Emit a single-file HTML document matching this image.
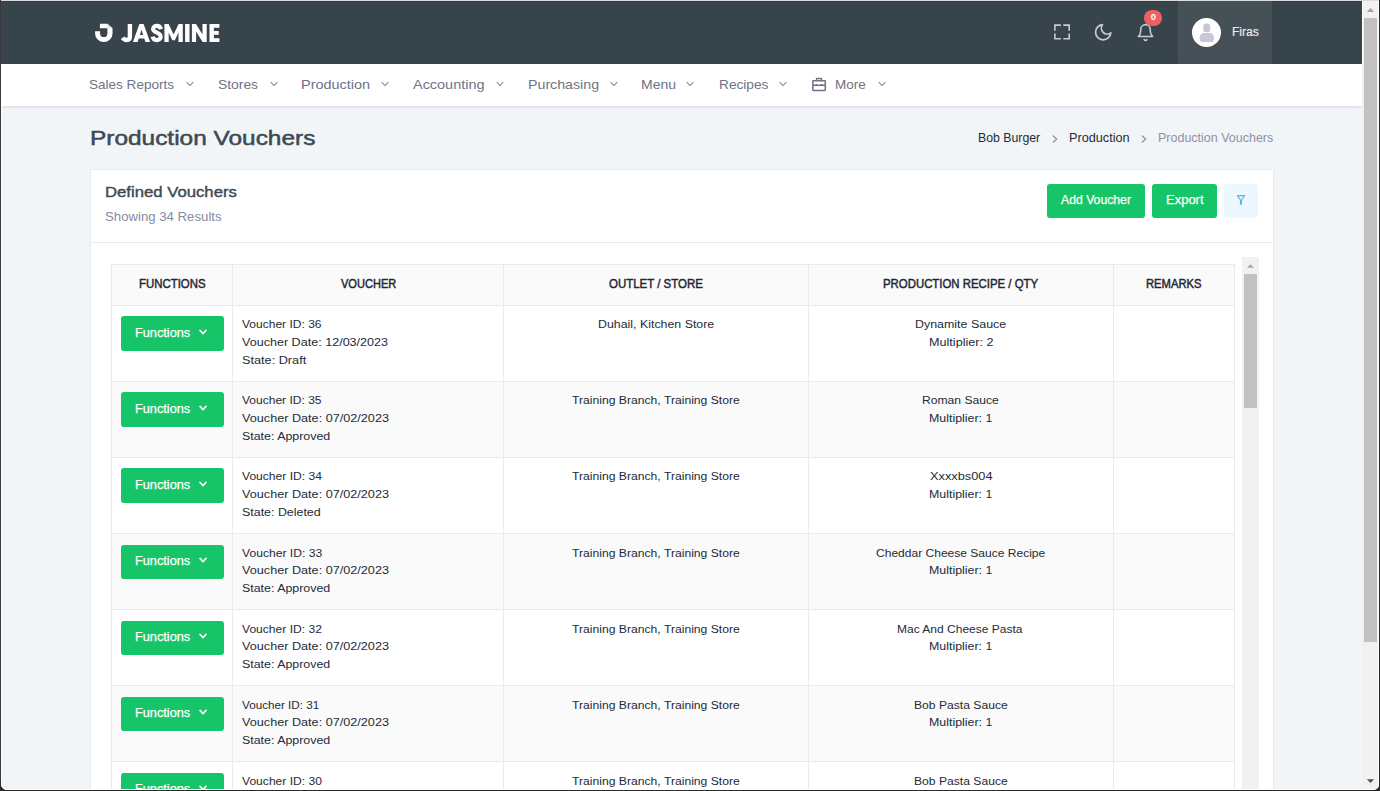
<!DOCTYPE html>
<html><head><meta charset="utf-8"><title>Production Vouchers</title>
<style>
html,body{margin:0;padding:0;overflow:hidden;}
#app{position:absolute;left:0;top:0;width:1380px;height:791px;overflow:hidden;background:#f1f5f8;}
body{width:1380px;height:791px;overflow:hidden;position:relative;background:#f1f5f8;font-family:"Liberation Sans",sans-serif;}
.b{position:absolute;display:block;}
.t{position:absolute;display:block;white-space:nowrap;line-height:1;transform-origin:0 50%;font-family:"Liberation Sans",sans-serif;}
</style></head><body>
<div id="app">
<div class="b" style="left:1px;top:1px;width:1361px;height:63px;background:#38444b;"></div>
<div class="b" style="left:1px;top:1px;width:1361px;height:1px;background:#323d43;"></div>
<svg class="b" style="left:0;top:0" width="130" height="60" viewBox="0 0 130 60"><path d="M99.9 23.7H107.4L112.5 28.3V33.4A8.7 8.7 0 0 1 95.1 33.4V31.2H100.1V33.4A3.65 3.65 0 0 0 107.4 33.4V28.3H99.9Z" fill="#fff"/><path d="M107.4 23.7V28.3H112.5Z" fill="#dfe3e6"/></svg>
<svg class="b" style="left:115px;top:18px" width="110" height="30" viewBox="115 18 110 30"><g fill="#fff"><path fill-rule="evenodd" d="M132.9 42L139.4 24H143.6L150.1 42H145.4L144.3 38.6H138.7L137.6 42ZM139.9 34.9H143.1L141.5 29.8Z"/><path d="M164.4 42V24H168.6L173.6 34.6L178.6 24H182.8V42H178.5V32.4L174.9 40.2H172.3L168.7 32.4V42Z"/><rect x="185.1" y="24" width="4.4" height="18"/><path d="M191.9 42V24H196L202.5 34.6V24H206.7V42H202.6L196.1 31.4V42Z"/><path d="M209.5 24H219.4V27.8H213.9V31.1H218.7V34.7H213.9V38.2H219.4V42H209.5Z"/></g><g fill="none" stroke="#fff"><path stroke-width="4.4" d="M129.9 24V36.6C129.9 39 128.4 40 126.6 40C124.9 40 123.6 39.2 122.6 37.8"/><path stroke-width="4.1" d="M160.9 29.3C160.4 27 158.9 25.9 156.9 25.9C154.7 25.9 153.1 27.1 153.1 28.9C153.1 30.8 154.6 31.6 157 32.6C159.4 33.6 160.7 34.7 160.7 36.8C160.7 38.9 159 40.1 156.8 40.1C154.6 40.1 153.1 38.9 152.7 36.6"/></g></svg>
<svg class="b" style="left:1050px;top:20px" width="24" height="24" viewBox="1050 20 24 24" fill="none" stroke="#c3ccd4" stroke-width="1.6"><path d="M1054.9 30.8V25.1H1060.9M1063.3 25.1H1069.2V30.8M1069.2 33.4V38.7H1063.3M1060.9 38.7H1054.9V33.4"/></svg>
<svg class="b" style="left:1093.20px;top:21.80px" width="20.4" height="20.4" viewBox="0 0 24 24" fill="none" stroke="#c3ccd4" stroke-width="2" stroke-linecap="round" stroke-linejoin="round"><path d="M21 12.79A9 9 0 1 1 11.21 3 7 7 0 0 0 21 12.79z"/></svg>
<svg class="b" style="left:1135.70px;top:22.50px" width="19" height="19" viewBox="0 0 24 24" fill="none" stroke="#c3ccd4" stroke-width="2" stroke-linecap="round" stroke-linejoin="round"><path d="M18 8A6 6 0 0 0 6 8c0 7-3 9-3 9h18s-3-2-3-9"/><path d="M13.73 21a2 2 0 0 1-3.46 0"/></svg>
<div class="b" style="left:1144px;top:10px;width:18.3px;height:15.7px;background:#ef6060;border-radius:8px"></div>
<span class="t" style="left:1150.67px;top:12.26px;font-size:9.5px;font-weight:700;color:#ffffff;transform:scaleX(1.0000);">0</span>
<div class="b" style="left:1178px;top:1px;width:94px;height:63px;background:#455157;"></div>
<div class="b" style="left:1191.8px;top:17.6px;width:29.5px;height:29.5px;background:#ffffff;border-radius:50%"></div>
<svg class="b" style="left:1191.8px;top:17.6px" width="29.5" height="29.5" viewBox="0 0 29.5 29.5"><rect x="11.2" y="5.6" width="7.1" height="8.6" rx="3.3" fill="#c9c6d7"/><path d="M7.7 21.5V19.2a4.3 4.3 0 0 1 4.3-4.3h5.6a4.3 4.3 0 0 1 4.3 4.3v2.3a2.4 2.4 0 0 1-2.4 2.4H10.100a2.4 2.4 0 0 1-2.4-2.4z" fill="#c9c6d7"/></svg>
<span class="t" style="left:1231.71px;top:25.00px;font-size:13px;font-weight:400;color:#e6ebef;transform:scaleX(0.9286);-webkit-text-stroke:0.2px #e6ebef;">Firas</span>
<div class="b" style="left:1px;top:64px;width:1361px;height:42px;background:#ffffff;box-shadow:0 1px 3px rgba(30,40,60,.12)"></div>
<span class="t" style="left:89.09px;top:77.97px;font-size:13.5px;font-weight:400;color:#6e7386;transform:scaleX(1.0025);">Sales Reports</span>
<svg class="b" style="left:181.70px;top:76.10px" width="16" height="16" viewBox="0 0 16 16" fill="none" stroke="#8b97a6" stroke-width="1.2" stroke-linecap="round" stroke-linejoin="round"><path d="M5.05 6.35L8 9.65L10.95 6.35"/></svg>
<span class="t" style="left:217.57px;top:77.97px;font-size:13.5px;font-weight:400;color:#6e7386;transform:scaleX(1.0260);">Stores</span>
<svg class="b" style="left:265.60px;top:76.10px" width="16" height="16" viewBox="0 0 16 16" fill="none" stroke="#8b97a6" stroke-width="1.2" stroke-linecap="round" stroke-linejoin="round"><path d="M5.05 6.35L8 9.65L10.95 6.35"/></svg>
<span class="t" style="left:301.31px;top:77.97px;font-size:13.5px;font-weight:400;color:#6e7386;transform:scaleX(1.0710);">Production</span>
<svg class="b" style="left:376.70px;top:76.10px" width="16" height="16" viewBox="0 0 16 16" fill="none" stroke="#8b97a6" stroke-width="1.2" stroke-linecap="round" stroke-linejoin="round"><path d="M5.05 6.35L8 9.65L10.95 6.35"/></svg>
<span class="t" style="left:413.37px;top:77.97px;font-size:13.5px;font-weight:400;color:#6e7386;transform:scaleX(1.0698);">Accounting</span>
<svg class="b" style="left:491.70px;top:76.10px" width="16" height="16" viewBox="0 0 16 16" fill="none" stroke="#8b97a6" stroke-width="1.2" stroke-linecap="round" stroke-linejoin="round"><path d="M5.05 6.35L8 9.65L10.95 6.35"/></svg>
<span class="t" style="left:527.93px;top:77.97px;font-size:13.5px;font-weight:400;color:#6e7386;transform:scaleX(1.0524);">Purchasing</span>
<svg class="b" style="left:605.70px;top:76.10px" width="16" height="16" viewBox="0 0 16 16" fill="none" stroke="#8b97a6" stroke-width="1.2" stroke-linecap="round" stroke-linejoin="round"><path d="M5.05 6.35L8 9.65L10.95 6.35"/></svg>
<span class="t" style="left:641.45px;top:77.97px;font-size:13.5px;font-weight:400;color:#6e7386;transform:scaleX(1.0389);">Menu</span>
<svg class="b" style="left:682.40px;top:76.10px" width="16" height="16" viewBox="0 0 16 16" fill="none" stroke="#8b97a6" stroke-width="1.2" stroke-linecap="round" stroke-linejoin="round"><path d="M5.05 6.35L8 9.65L10.95 6.35"/></svg>
<span class="t" style="left:718.68px;top:77.97px;font-size:13.5px;font-weight:400;color:#6e7386;transform:scaleX(1.0132);">Recipes</span>
<svg class="b" style="left:774.60px;top:76.10px" width="16" height="16" viewBox="0 0 16 16" fill="none" stroke="#8b97a6" stroke-width="1.2" stroke-linecap="round" stroke-linejoin="round"><path d="M5.05 6.35L8 9.65L10.95 6.35"/></svg>
<span class="t" style="left:835.39px;top:77.97px;font-size:13.5px;font-weight:400;color:#6e7386;transform:scaleX(0.9983);">More</span>
<svg class="b" style="left:873.60px;top:76.10px" width="16" height="16" viewBox="0 0 16 16" fill="none" stroke="#8b97a6" stroke-width="1.2" stroke-linecap="round" stroke-linejoin="round"><path d="M5.05 6.35L8 9.65L10.95 6.35"/></svg>
<svg class="b" style="left:810px;top:75px" width="20" height="20" viewBox="0 0 20 20" fill="none" stroke="#6e7386" stroke-width="1.5" stroke-linejoin="round"><rect x="2.8" y="5.8" width="12.5" height="9.6" rx="0.6"/><path d="M6.6 5.8V3.6h4.9V5.8"/><path d="M2.8 10.3H15.3"/><path d="M6.5 9v1.3M11.6 9v1.3"/></svg>
<span class="t" style="left:90.10px;top:127.02px;font-size:21px;font-weight:400;color:#3d4852;transform:scaleX(1.1628);-webkit-text-stroke:0.5px #3d4852;">Production Vouchers</span>
<span class="t" style="left:978.19px;top:131.63px;font-size:12.6px;font-weight:400;color:#252b37;transform:scaleX(0.9761);">Bob Burger</span>
<svg class="b" style="left:1047.20px;top:130.50px" width="16" height="16" viewBox="0 0 16 16" fill="none" stroke="#8a8fa3" stroke-width="1.2" stroke-linecap="round" stroke-linejoin="round"><path d="M6.30 5.00L9.70 8L6.30 11.00"/></svg>
<span class="t" style="left:1068.76px;top:131.63px;font-size:12.6px;font-weight:400;color:#252b37;transform:scaleX(1.0071);">Production</span>
<svg class="b" style="left:1135.90px;top:130.50px" width="16" height="16" viewBox="0 0 16 16" fill="none" stroke="#8a8fa3" stroke-width="1.2" stroke-linecap="round" stroke-linejoin="round"><path d="M6.30 5.00L9.70 8L6.30 11.00"/></svg>
<span class="t" style="left:1157.68px;top:131.63px;font-size:12.6px;font-weight:400;color:#8d92a3;transform:scaleX(0.9915);">Production Vouchers</span>
<div class="b" style="left:90px;top:169px;width:1184px;height:640px;background:#ffffff;border:1px solid #e8eaec;box-sizing:border-box"></div>
<div class="b" style="left:90px;top:242px;width:1184px;height:1px;background:#e8eaec;"></div>
<span class="t" style="left:104.93px;top:183.88px;font-size:15.5px;font-weight:400;color:#3d4852;transform:scaleX(1.0776);-webkit-text-stroke:0.4px #3d4852;">Defined Vouchers</span>
<span class="t" style="left:104.90px;top:210.30px;font-size:13px;font-weight:400;color:#858ba0;transform:scaleX(1.0146);">Showing 34 Results</span>
<div class="b" style="left:1047px;top:184px;width:98px;height:34px;background:#16c568;border-radius:3px"></div>
<span class="t" style="left:1060.58px;top:193.74px;font-size:12px;font-weight:400;color:#ffffff;transform:scaleX(1.0180);-webkit-text-stroke:0.25px #ffffff;">Add Voucher</span>
<div class="b" style="left:1152px;top:184px;width:65px;height:34px;background:#16c568;border-radius:3px"></div>
<span class="t" style="left:1165.73px;top:193.74px;font-size:12px;font-weight:400;color:#ffffff;transform:scaleX(1.0830);-webkit-text-stroke:0.25px #ffffff;">Export</span>
<div class="b" style="left:1224px;top:184px;width:34px;height:34px;background:#ecf8fe;border-radius:3px"></div>
<svg class="b" style="left:1231px;top:190px" width="20" height="20" viewBox="0 0 20 20" fill="none" stroke="#52b7ea" stroke-width="1.15" stroke-linejoin="round"><path d="M6.4 5.6H13.6L10.5 10V13.7L9.5 14.3V10Z"/></svg>
<div class="b" style="left:111px;top:264px;width:1124px;height:41px;background:#fafafa;"></div>
<div class="b" style="left:111px;top:381px;width:1124px;height:76px;background:#fafafa;"></div>
<div class="b" style="left:111px;top:533px;width:1124px;height:76px;background:#fafafa;"></div>
<div class="b" style="left:111px;top:685px;width:1124px;height:76px;background:#fafafa;"></div>
<div class="b" style="left:111px;top:264px;width:1124px;height:1px;background:#e8eaec;"></div>
<div class="b" style="left:111px;top:305px;width:1124px;height:1px;background:#e8eaec;"></div>
<div class="b" style="left:111px;top:381px;width:1124px;height:1px;background:#e8eaec;"></div>
<div class="b" style="left:111px;top:457px;width:1124px;height:1px;background:#e8eaec;"></div>
<div class="b" style="left:111px;top:533px;width:1124px;height:1px;background:#e8eaec;"></div>
<div class="b" style="left:111px;top:609px;width:1124px;height:1px;background:#e8eaec;"></div>
<div class="b" style="left:111px;top:685px;width:1124px;height:1px;background:#e8eaec;"></div>
<div class="b" style="left:111px;top:761px;width:1124px;height:1px;background:#e8eaec;"></div>
<div class="b" style="left:111px;top:264px;width:1px;height:540px;background:#e8eaec;"></div>
<div class="b" style="left:232px;top:264px;width:1px;height:540px;background:#e8eaec;"></div>
<div class="b" style="left:503px;top:264px;width:1px;height:540px;background:#e8eaec;"></div>
<div class="b" style="left:808px;top:264px;width:1px;height:540px;background:#e8eaec;"></div>
<div class="b" style="left:1113px;top:264px;width:1px;height:540px;background:#e8eaec;"></div>
<div class="b" style="left:1234px;top:264px;width:1px;height:540px;background:#e8eaec;"></div>
<span class="t" style="left:139.06px;top:278.44px;font-size:12px;font-weight:400;color:#1f2733;transform:scaleX(0.9509);-webkit-text-stroke:0.45px #1f2733;">FUNCTIONS</span>
<span class="t" style="left:340.75px;top:278.44px;font-size:12px;font-weight:400;color:#1f2733;transform:scaleX(0.9209);-webkit-text-stroke:0.45px #1f2733;">VOUCHER</span>
<span class="t" style="left:609.06px;top:278.44px;font-size:12px;font-weight:400;color:#1f2733;transform:scaleX(0.9550);-webkit-text-stroke:0.45px #1f2733;">OUTLET / STORE</span>
<span class="t" style="left:883.17px;top:278.44px;font-size:12px;font-weight:400;color:#1f2733;transform:scaleX(0.9494);-webkit-text-stroke:0.45px #1f2733;">PRODUCTION RECIPE / QTY</span>
<span class="t" style="left:1146.08px;top:278.44px;font-size:12px;font-weight:400;color:#1f2733;transform:scaleX(0.9358);-webkit-text-stroke:0.45px #1f2733;">REMARKS</span>
<div class="b" style="left:121px;top:316px;width:103px;height:35px;background:#16c568;border-radius:3px"></div>
<span class="t" style="left:134.76px;top:326.97px;font-size:12.2px;font-weight:400;color:#ffffff;transform:scaleX(1.0437);-webkit-text-stroke:0.25px #ffffff;">Functions</span>
<svg class="b" style="left:195.30px;top:324.20px" width="16" height="16" viewBox="0 0 16 16" fill="none" stroke="#ffffff" stroke-width="1.6" stroke-linecap="round" stroke-linejoin="round"><path d="M5.00 6.40L8 9.60L11.00 6.40"/></svg>
<span class="t" style="left:242.35px;top:318.40px;font-size:11.7px;font-weight:400;color:#252b37;transform:scaleX(1.0287);">Voucher ID: 36</span>
<span class="t" style="left:242.34px;top:336.30px;font-size:11.7px;font-weight:400;color:#252b37;transform:scaleX(1.0755);">Voucher Date: 12/03/2023</span>
<span class="t" style="left:241.82px;top:354.10px;font-size:11.7px;font-weight:400;color:#252b37;transform:scaleX(1.0861);">State: Draft</span>
<span class="t" style="left:597.68px;top:318.40px;font-size:11.7px;font-weight:400;color:#252b37;transform:scaleX(1.0587);">Duhail, Kitchen Store</span>
<span class="t" style="left:915.23px;top:318.40px;font-size:11.7px;font-weight:400;color:#252b37;transform:scaleX(1.0633);">Dynamite Sauce</span>
<span class="t" style="left:928.71px;top:336.30px;font-size:11.7px;font-weight:400;color:#252b37;transform:scaleX(1.0794);">Multiplier: 2</span>
<div class="b" style="left:121px;top:392px;width:103px;height:35px;background:#16c568;border-radius:3px"></div>
<span class="t" style="left:134.76px;top:402.97px;font-size:12.2px;font-weight:400;color:#ffffff;transform:scaleX(1.0437);-webkit-text-stroke:0.25px #ffffff;">Functions</span>
<svg class="b" style="left:195.30px;top:400.20px" width="16" height="16" viewBox="0 0 16 16" fill="none" stroke="#ffffff" stroke-width="1.6" stroke-linecap="round" stroke-linejoin="round"><path d="M5.00 6.40L8 9.60L11.00 6.40"/></svg>
<span class="t" style="left:242.35px;top:394.40px;font-size:11.7px;font-weight:400;color:#252b37;transform:scaleX(1.0284);">Voucher ID: 35</span>
<span class="t" style="left:242.34px;top:412.30px;font-size:11.7px;font-weight:400;color:#252b37;transform:scaleX(1.0821);">Voucher Date: 07/02/2023</span>
<span class="t" style="left:241.84px;top:430.10px;font-size:11.7px;font-weight:400;color:#252b37;transform:scaleX(1.0603);">State: Approved</span>
<span class="t" style="left:571.68px;top:394.40px;font-size:11.7px;font-weight:400;color:#252b37;transform:scaleX(1.0402);">Training Branch, Training Store</span>
<span class="t" style="left:922.40px;top:394.40px;font-size:11.7px;font-weight:400;color:#252b37;transform:scaleX(1.0377);">Roman Sauce</span>
<span class="t" style="left:929.28px;top:412.30px;font-size:11.7px;font-weight:400;color:#252b37;transform:scaleX(1.0602);">Multiplier: 1</span>
<div class="b" style="left:121px;top:468px;width:103px;height:35px;background:#16c568;border-radius:3px"></div>
<span class="t" style="left:134.76px;top:478.97px;font-size:12.2px;font-weight:400;color:#ffffff;transform:scaleX(1.0437);-webkit-text-stroke:0.25px #ffffff;">Functions</span>
<svg class="b" style="left:195.30px;top:476.20px" width="16" height="16" viewBox="0 0 16 16" fill="none" stroke="#ffffff" stroke-width="1.6" stroke-linecap="round" stroke-linejoin="round"><path d="M5.00 6.40L8 9.60L11.00 6.40"/></svg>
<span class="t" style="left:242.35px;top:470.40px;font-size:11.7px;font-weight:400;color:#252b37;transform:scaleX(1.0328);">Voucher ID: 34</span>
<span class="t" style="left:242.34px;top:488.30px;font-size:11.7px;font-weight:400;color:#252b37;transform:scaleX(1.0821);">Voucher Date: 07/02/2023</span>
<span class="t" style="left:241.84px;top:506.10px;font-size:11.7px;font-weight:400;color:#252b37;transform:scaleX(1.0623);">State: Deleted</span>
<span class="t" style="left:571.68px;top:470.40px;font-size:11.7px;font-weight:400;color:#252b37;transform:scaleX(1.0402);">Training Branch, Training Store</span>
<span class="t" style="left:929.86px;top:470.40px;font-size:11.7px;font-weight:400;color:#252b37;transform:scaleX(1.0931);">Xxxxbs004</span>
<span class="t" style="left:929.28px;top:488.30px;font-size:11.7px;font-weight:400;color:#252b37;transform:scaleX(1.0602);">Multiplier: 1</span>
<div class="b" style="left:121px;top:545px;width:103px;height:34px;background:#16c568;border-radius:3px"></div>
<span class="t" style="left:134.76px;top:554.97px;font-size:12.2px;font-weight:400;color:#ffffff;transform:scaleX(1.0437);-webkit-text-stroke:0.25px #ffffff;">Functions</span>
<svg class="b" style="left:195.30px;top:552.20px" width="16" height="16" viewBox="0 0 16 16" fill="none" stroke="#ffffff" stroke-width="1.6" stroke-linecap="round" stroke-linejoin="round"><path d="M5.00 6.40L8 9.60L11.00 6.40"/></svg>
<span class="t" style="left:242.35px;top:547.40px;font-size:11.7px;font-weight:400;color:#252b37;transform:scaleX(1.0364);">Voucher ID: 33</span>
<span class="t" style="left:242.34px;top:564.30px;font-size:11.7px;font-weight:400;color:#252b37;transform:scaleX(1.0821);">Voucher Date: 07/02/2023</span>
<span class="t" style="left:241.84px;top:582.10px;font-size:11.7px;font-weight:400;color:#252b37;transform:scaleX(1.0603);">State: Approved</span>
<span class="t" style="left:571.68px;top:547.40px;font-size:11.7px;font-weight:400;color:#252b37;transform:scaleX(1.0402);">Training Branch, Training Store</span>
<span class="t" style="left:876.34px;top:547.40px;font-size:11.7px;font-weight:400;color:#252b37;transform:scaleX(1.0297);">Cheddar Cheese Sauce Recipe</span>
<span class="t" style="left:929.28px;top:564.30px;font-size:11.7px;font-weight:400;color:#252b37;transform:scaleX(1.0602);">Multiplier: 1</span>
<div class="b" style="left:121px;top:621px;width:103px;height:34px;background:#16c568;border-radius:3px"></div>
<span class="t" style="left:134.76px;top:630.97px;font-size:12.2px;font-weight:400;color:#ffffff;transform:scaleX(1.0437);-webkit-text-stroke:0.25px #ffffff;">Functions</span>
<svg class="b" style="left:195.30px;top:628.20px" width="16" height="16" viewBox="0 0 16 16" fill="none" stroke="#ffffff" stroke-width="1.6" stroke-linecap="round" stroke-linejoin="round"><path d="M5.00 6.40L8 9.60L11.00 6.40"/></svg>
<span class="t" style="left:242.35px;top:623.40px;font-size:11.7px;font-weight:400;color:#252b37;transform:scaleX(1.0335);">Voucher ID: 32</span>
<span class="t" style="left:242.34px;top:640.30px;font-size:11.7px;font-weight:400;color:#252b37;transform:scaleX(1.0821);">Voucher Date: 07/02/2023</span>
<span class="t" style="left:241.84px;top:658.10px;font-size:11.7px;font-weight:400;color:#252b37;transform:scaleX(1.0603);">State: Approved</span>
<span class="t" style="left:571.68px;top:623.40px;font-size:11.7px;font-weight:400;color:#252b37;transform:scaleX(1.0402);">Training Branch, Training Store</span>
<span class="t" style="left:897.46px;top:623.40px;font-size:11.7px;font-weight:400;color:#252b37;transform:scaleX(1.0274);">Mac And Cheese Pasta</span>
<span class="t" style="left:929.28px;top:640.30px;font-size:11.7px;font-weight:400;color:#252b37;transform:scaleX(1.0602);">Multiplier: 1</span>
<div class="b" style="left:121px;top:697px;width:103px;height:34px;background:#16c568;border-radius:3px"></div>
<span class="t" style="left:134.76px;top:706.97px;font-size:12.2px;font-weight:400;color:#ffffff;transform:scaleX(1.0437);-webkit-text-stroke:0.25px #ffffff;">Functions</span>
<svg class="b" style="left:195.30px;top:704.20px" width="16" height="16" viewBox="0 0 16 16" fill="none" stroke="#ffffff" stroke-width="1.6" stroke-linecap="round" stroke-linejoin="round"><path d="M5.00 6.40L8 9.60L11.00 6.40"/></svg>
<span class="t" style="left:242.35px;top:699.40px;font-size:11.7px;font-weight:400;color:#252b37;transform:scaleX(0.9997);">Voucher ID: 31</span>
<span class="t" style="left:242.34px;top:716.30px;font-size:11.7px;font-weight:400;color:#252b37;transform:scaleX(1.0821);">Voucher Date: 07/02/2023</span>
<span class="t" style="left:241.84px;top:734.10px;font-size:11.7px;font-weight:400;color:#252b37;transform:scaleX(1.0603);">State: Approved</span>
<span class="t" style="left:571.68px;top:699.40px;font-size:11.7px;font-weight:400;color:#252b37;transform:scaleX(1.0402);">Training Branch, Training Store</span>
<span class="t" style="left:913.95px;top:699.40px;font-size:11.7px;font-weight:400;color:#252b37;transform:scaleX(1.0379);">Bob Pasta Sauce</span>
<span class="t" style="left:929.28px;top:716.30px;font-size:11.7px;font-weight:400;color:#252b37;transform:scaleX(1.0602);">Multiplier: 1</span>
<div class="b" style="left:121px;top:773px;width:103px;height:34px;background:#16c568;border-radius:3px"></div>
<span class="t" style="left:134.76px;top:782.97px;font-size:12.2px;font-weight:400;color:#ffffff;transform:scaleX(1.0437);-webkit-text-stroke:0.25px #ffffff;">Functions</span>
<svg class="b" style="left:195.30px;top:780.20px" width="16" height="16" viewBox="0 0 16 16" fill="none" stroke="#ffffff" stroke-width="1.6" stroke-linecap="round" stroke-linejoin="round"><path d="M5.00 6.40L8 9.60L11.00 6.40"/></svg>
<span class="t" style="left:242.35px;top:775.40px;font-size:11.7px;font-weight:400;color:#252b37;transform:scaleX(1.0344);">Voucher ID: 30</span>
<span class="t" style="left:242.34px;top:792.30px;font-size:11.7px;font-weight:400;color:#252b37;transform:scaleX(1.0821);">Voucher Date: 07/02/2023</span>
<span class="t" style="left:241.84px;top:810.10px;font-size:11.7px;font-weight:400;color:#252b37;transform:scaleX(1.0603);">State: Approved</span>
<span class="t" style="left:571.68px;top:775.40px;font-size:11.7px;font-weight:400;color:#252b37;transform:scaleX(1.0402);">Training Branch, Training Store</span>
<span class="t" style="left:913.95px;top:775.40px;font-size:11.7px;font-weight:400;color:#252b37;transform:scaleX(1.0379);">Bob Pasta Sauce</span>
<span class="t" style="left:929.28px;top:792.30px;font-size:11.7px;font-weight:400;color:#252b37;transform:scaleX(1.0602);">Multiplier: 1</span>
<div class="b" style="left:1242px;top:257px;width:17px;height:560px;background:#f1f1f1;"></div>
<div class="b" style="left:1244px;top:274px;width:13px;height:133.5px;background:#c1c1c1;"></div>
<svg class="b" style="left:1242px;top:257px" width="17" height="17" viewBox="0 0 17 17"><path d="M5 10.8L8.5 7.2L12 10.8Z" fill="#a3a3a3"/></svg>
<div class="b" style="left:1362px;top:1px;width:17px;height:790px;background:#f1f1f1;"></div>
<div class="b" style="left:1362px;top:1px;width:1px;height:63px;background:#ffffff;"></div>
<div class="b" style="left:1378px;top:1px;width:1px;height:790px;background:#fdfdfd;"></div>
<div class="b" style="left:1364px;top:18px;width:13px;height:624px;background:#c1c1c1;"></div>
<svg class="b" style="left:1362px;top:1px" width="17" height="17" viewBox="0 0 17 17"><path d="M4.8 10.9L8.5 7.1L12.2 10.9Z" fill="#a3a3a3"/></svg>
<svg class="b" style="left:1362px;top:773px" width="17" height="17" viewBox="0 0 17 17"><path d="M4.8 6.2L8.5 10L12.2 6.2Z" fill="#505050"/></svg>
<div class="b" style="left:0px;top:0px;width:1380px;height:1px;background:#dcdcdc;"></div>
<div class="b" style="left:1px;top:106px;width:1px;height:684px;background:#ffffff;"></div>
<div class="b" style="left:0px;top:0px;width:1px;height:791px;background:#3b3a3a;"></div>
<div class="b" style="left:1379px;top:0px;width:1px;height:791px;background:#2a2a2a;"></div>
<div class="b" style="left:0px;top:789px;width:1380px;height:1px;background:#ffffff;"></div>
<div class="b" style="left:0px;top:790px;width:1380px;height:1px;background:#2a2a2a;"></div>
<svg class="b" style="left:0px;top:781px" width="10" height="10" viewBox="0 0 10 10"><path d="M0 0V10H10V9H6.8A5.8 5.8 0 0 1 1 3.2V0Z" fill="#2a2a2a"/><path d="M1.5 0V3.2A5.3 5.3 0 0 0 6.8 8.5H10" fill="none" stroke="#fff" stroke-width="1"/></svg>
<svg class="b" style="left:1370px;top:781px" width="10" height="10" viewBox="0 0 10 10"><path d="M10 0V10H0V9.2H3.2A6 6 0 0 0 9.2 3.2V0Z" fill="#2a2a2a"/></svg>
</div>
</body></html>
